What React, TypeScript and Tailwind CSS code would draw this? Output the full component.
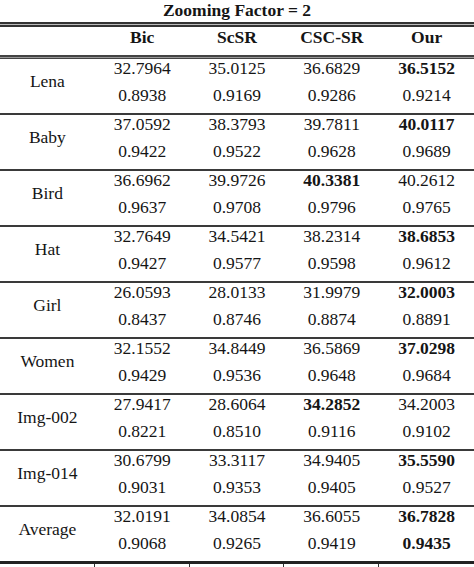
import React from 'react';

type Row = { name: string; psnr: string[]; ssim: string[]; bp: number; bs?: number };

const rows: Row[] = [
  { name: 'Lena', psnr: ['32.7964', '35.0125', '36.6829', '36.5152'], ssim: ['0.8938', '0.9169', '0.9286', '0.9214'], bp: 3 },
  { name: 'Baby', psnr: ['37.0592', '38.3793', '39.7811', '40.0117'], ssim: ['0.9422', '0.9522', '0.9628', '0.9689'], bp: 3 },
  { name: 'Bird', psnr: ['36.6962', '39.9726', '40.3381', '40.2612'], ssim: ['0.9637', '0.9708', '0.9796', '0.9765'], bp: 2 },
  { name: 'Hat', psnr: ['32.7649', '34.5421', '38.2314', '38.6853'], ssim: ['0.9427', '0.9577', '0.9598', '0.9612'], bp: 3 },
  { name: 'Girl', psnr: ['26.0593', '28.0133', '31.9979', '32.0003'], ssim: ['0.8437', '0.8746', '0.8874', '0.8891'], bp: 3 },
  { name: 'Women', psnr: ['32.1552', '34.8449', '36.5869', '37.0298'], ssim: ['0.9429', '0.9536', '0.9648', '0.9684'], bp: 3 },
  { name: 'Img-002', psnr: ['27.9417', '28.6064', '34.2852', '34.2003'], ssim: ['0.8221', '0.8510', '0.9116', '0.9102'], bp: 2 },
  { name: 'Img-014', psnr: ['30.6799', '33.3117', '34.9405', '35.5590'], ssim: ['0.9031', '0.9353', '0.9405', '0.9527'], bp: 3 },
  { name: 'Average', psnr: ['32.0191', '34.0854', '36.6055', '36.7828'], ssim: ['0.9068', '0.9265', '0.9419', '0.9435'], bp: 3, bs: 3 },
];

const methods = ['Bic', 'ScSR', 'CSC-SR', 'Our'];

export default function App() {
  return (
    <div className="w-[474px] h-[567px] overflow-hidden bg-white text-[#151515] text-[17.5px] leading-none" style={{ fontFamily: '"Liberation Serif", "Times New Roman", serif' }}>
      <div className="h-[22px] flex items-center justify-center font-bold">Zooming Factor = 2</div>
      {/* top double rule */}
      <div className="h-[5px] border-t-[2px] border-b-[2px] border-[#333] bg-[#bbb]" />
      <div className="grid grid-cols-5 h-[28px] items-center text-center font-bold pb-[7px]">
        <div />
        {methods.map(m => <div key={m}>{m}</div>)}
      </div>
      {/* header double rule */}
      <div className="h-[4px] border-t-[2px] border-b-[1px] border-[#444] bg-[#999]" />
      {rows.map((r, i) => {
        const last = i === rows.length - 1;
        return (
          <div key={r.name} className={`grid grid-cols-5 grid-rows-[19px_35px] text-center ${last ? 'h-[57px] border-b-[3px] border-[#222]' : 'h-[56px] border-b-[2px] border-[#3a3a3a]'}`}>
            <div className="row-span-2 flex items-center justify-center pb-[8px]">{r.name}</div>
            {r.psnr.map((v, j) => (
              <div key={j} className={`flex items-center justify-center ${j === r.bp ? 'font-bold' : ''}`}>{v}</div>
            ))}
            {r.ssim.map((v, j) => (
              <div key={j} className={`flex items-center justify-center ${j === r.bs ? 'font-bold' : ''}`}>{v}</div>
            ))}
          </div>
        );
      })}
      <div className="grid grid-cols-5 h-[6px]">
        <div className="border-r border-[#333]" />
        <div className="border-r border-[#333]" />
        <div className="border-r border-[#333]" />
        <div className="border-r border-[#333]" />
        <div />
      </div>
    </div>
  );
}
